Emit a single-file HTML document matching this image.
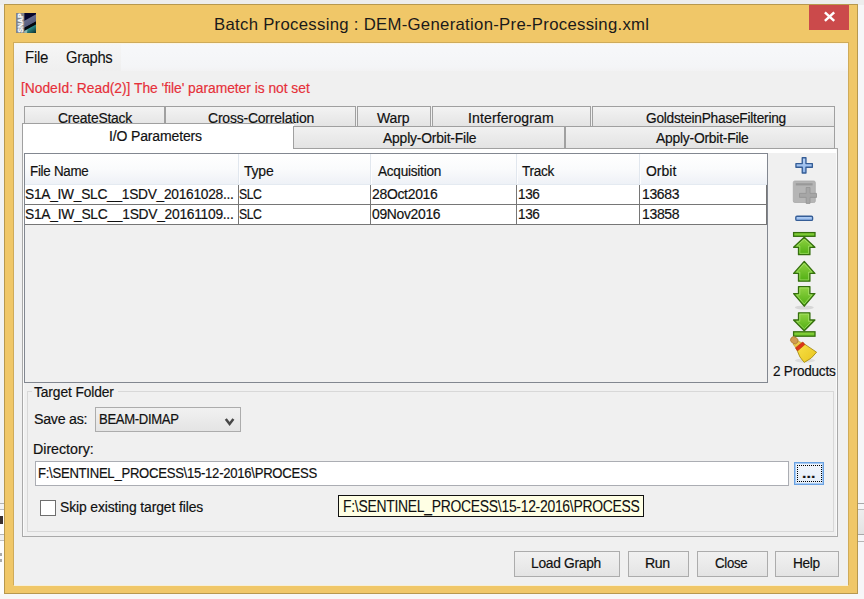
<!DOCTYPE html>
<html><head><meta charset="utf-8"><title>Batch Processing : DEM-Generation-Pre-Processing.xml</title>
<style>
html,body{margin:0;padding:0;}
body{width:864px;height:599px;position:relative;overflow:hidden;background:#f4f4f4;font-family:"Liberation Sans",sans-serif;}
.a{position:absolute;box-sizing:border-box;}
.t{-webkit-text-stroke:0.18px;position:absolute;white-space:pre;line-height:normal;font-family:"Liberation Sans",sans-serif;}
.tab{position:absolute;box-sizing:border-box;border:1px solid #a0a0a0;background:linear-gradient(#f3f3f3,#e4e4e4);}
.btn{position:absolute;box-sizing:border-box;border:1px solid #acacac;background:linear-gradient(#f1f1f1,#e4e4e4);}
.vl{position:absolute;width:1px;}
.hl{position:absolute;height:1px;}

</style></head>
<body>
<!-- desktop strips -->
<div class="a" style="left:0;top:0;width:864px;height:5px;background:#ededed"></div>
<div class="a" style="left:0;top:5px;width:5px;height:498px;background:#f2f2f2"></div>
<div class="a" style="left:0;top:503px;width:5px;height:1px;background:#b2b2b2"></div>
<div class="a" style="left:0;top:504px;width:5px;height:5px;background:#f3f3f3"></div>
<div class="a" style="left:0;top:509px;width:5px;height:1px;background:#bdbdbd"></div>
<div class="a" style="left:0;top:510px;width:5px;height:24px;background:#fdfdfd"></div>
<div class="a" style="left:0;top:516px;width:3px;height:8px;background:#3a3030"></div>
<div class="a" style="left:0;top:534px;width:5px;height:1px;background:#b5b5b5"></div>
<div class="a" style="left:0;top:535px;width:5px;height:5px;background:#efefef"></div>
<div class="a" style="left:0;top:540px;width:5px;height:1px;background:#c0c0c0"></div>
<div class="a" style="left:0;top:541px;width:5px;height:58px;background:#fcfcfc"></div>
<div class="a" style="left:0;top:553px;width:2px;height:3px;background:#aaa"></div>
<div class="a" style="left:0;top:559px;width:2px;height:3px;background:#aaa"></div>
<div class="a" style="left:858px;top:5px;width:6px;height:594px;background:#f6f6f8"></div>
<div class="a" style="left:858px;top:503px;width:6px;height:1px;background:#a8a8a8"></div>
<div class="a" style="left:858px;top:509px;width:6px;height:1px;background:#bdbdbd"></div>
<div class="a" style="left:858px;top:510px;width:6px;height:24px;background:linear-gradient(#eeeeee,#e3e3e3)"></div>
<div class="a" style="left:858px;top:534px;width:6px;height:1px;background:#a8a8a8"></div>
<div class="a" style="left:858px;top:541px;width:6px;height:1px;background:#b5b5b5"></div>
<div class="a" style="left:0;top:594px;width:864px;height:5px;background:#f7f7f7"></div>
<!-- window frame -->
<div class="a" id="win" style="left:4px;top:4px;width:854px;height:590px;background:#f0c768;border:1px solid #b7984e"></div>
<!-- app icon -->
<svg class="a" style="left:16px;top:13px" width="20" height="20" viewBox="0 0 20 20">
  <defs><linearGradient id="tg" x1="0" y1="0" x2="1" y2="1"><stop offset="0" stop-color="#0b1416"/><stop offset="0.45" stop-color="#2f8f8b"/><stop offset="1" stop-color="#0c2a2c"/></linearGradient>
  <linearGradient id="bg2" x1="0" y1="0" x2="0.5" y2="1"><stop offset="0" stop-color="#777b9c"/><stop offset="1" stop-color="#4f5474"/></linearGradient></defs>
  <rect x="0" y="0" width="20" height="20" fill="#07062c"/>
  <path d="M8 8 L20 1.2 L20 8.4 L8 15 Z" fill="url(#bg2)"/>
  <path d="M8 15 L20 8.4 L20 11.6 L8 18 Z" fill="#05070b"/>
  <path d="M8 18 L20 11.6 L20 20 L8 20 Z" fill="url(#tg)"/>
  <path d="M8 18.2 L11.5 16.5 L11 20 L8 20 Z" fill="#a9c2bd" opacity="0.8"/>
  <rect x="0" y="0" width="8.4" height="20" fill="#83858b"/>
  <text x="0" y="0" transform="translate(7.3,19.6) rotate(-90)" font-family="Liberation Sans, sans-serif" font-weight="bold" font-size="7.8" fill="#fff" stroke="#fff" stroke-width="0.3" textLength="19.2" lengthAdjust="spacingAndGlyphs">SNAP</text>
</svg>
<!-- close button -->
<div class="a" style="left:809px;top:5px;width:40px;height:25px;background:#cb4a4b"></div>
<svg class="a" style="left:820px;top:8px" width="20" height="18" viewBox="820 8 20 18"><path d="M824.9 12.3 L834.2 20.8 M834.2 12.3 L824.9 20.8" stroke="#fff" stroke-width="2.5" fill="none"/></svg>
<!-- client -->
<div class="a" style="left:13px;top:42px;width:836px;height:543px;background:#cfab5a"></div>
<div class="a" style="left:14px;top:585px;width:834px;height:1px;background:#f7efd8"></div>
<div class="a" id="client" style="left:14px;top:43px;width:834px;height:542px;background:#f0f0f0"></div>
<!-- menubar -->
<div class="a" style="left:14px;top:43px;width:834px;height:28px;background:linear-gradient(#f7f8fa,#f4f5f7 85%,#f2f2f3)"></div>
<div class="a" style="left:14px;top:43px;width:107px;height:28px;background:linear-gradient(#f6f6f6,#efefef)"></div>
<div class="a" style="left:14px;top:43px;width:834px;height:1px;background:#fcf6e6"></div>

<!-- tabs row 1 -->
<div class="tab" style="left:24px;top:106px;width:141px;height:21px"></div>
<div class="tab" style="left:165px;top:106px;width:191px;height:21px"></div>
<div class="tab" style="left:357px;top:106px;width:74px;height:21px"></div>
<div class="tab" style="left:432px;top:106px;width:159px;height:21px"></div>
<div class="tab" style="left:592px;top:106px;width:243px;height:21px"></div>
<span class="t" style="left:57.73px;top:111px;font-size:13.8px;letter-spacing:-0.217px;transform:scaleX(1.0075);transform-origin:0 0;color:#111;">CreateStack</span>
<span class="t" style="left:207.71px;top:111px;font-size:13.8px;letter-spacing:-0.194px;transform:scaleX(1.0115);transform-origin:0 0;color:#111;">Cross-Correlation</span>
<span class="t" style="left:376.88px;top:111px;font-size:13.8px;letter-spacing:-0.151px;transform:scaleX(1.0149);transform-origin:0 0;color:#111;">Warp</span>
<span class="t" style="left:467.59px;top:111px;font-size:13.8px;letter-spacing:0.098px;transform:scaleX(1.0201);transform-origin:0 0;color:#111;">Interferogram</span>
<span class="t" style="left:645.84px;top:111px;font-size:13.8px;letter-spacing:-0.233px;transform:scaleX(0.9917);transform-origin:0 0;color:#111;">GoldsteinPhaseFiltering</span>
<!-- content pane borders -->
<div class="a" style="left:22px;top:148px;width:816px;height:389px;border:1px solid #a9a9a9;background:#f0f0f0"></div>
<div class="a" style="left:23px;top:149px;width:814px;height:4px;background:#fff"></div>
<div class="a" style="left:23px;top:149px;width:1px;height:387px;background:#fafafa"></div>
<div class="a" style="left:836px;top:149px;width:1px;height:387px;background:#fafafa"></div>
<!-- selected tab -->
<div class="a" style="left:22px;top:123px;width:272px;height:27px;background:#fff;border:1px solid #a0a0a0;border-bottom:none;border-right:none"></div>
<!-- tabs row 2 -->
<div class="tab" style="left:293px;top:126px;width:272px;height:23px;background:linear-gradient(#f1f1f1,#e3e3e3)"></div>
<div class="tab" style="left:565px;top:126px;width:270px;height:23px;background:linear-gradient(#f1f1f1,#e3e3e3)"></div>

<!-- table -->
<div class="a" style="left:24px;top:153px;width:744px;height:230px;border:1px solid #828790;background:#f0f0f0"></div>
<div class="a" style="left:25px;top:154px;width:742px;height:31px;background:linear-gradient(#ffffff,#fafbfc 50%,#f2f4f8 85%,#eef2f7);border-bottom:1px solid #e4eaf1"></div>
<div class="vl" style="left:238px;top:154px;height:30px;background:#e1e7ee"></div><div class="vl" style="left:239px;top:154px;height:30px;background:#fdfdfe"></div>
<div class="vl" style="left:370px;top:154px;height:30px;background:#e1e7ee"></div><div class="vl" style="left:371px;top:154px;height:30px;background:#fdfdfe"></div>
<div class="vl" style="left:516px;top:154px;height:30px;background:#e1e7ee"></div><div class="vl" style="left:517px;top:154px;height:30px;background:#fdfdfe"></div>
<div class="vl" style="left:639px;top:154px;height:30px;background:#e1e7ee"></div><div class="vl" style="left:640px;top:154px;height:30px;background:#fdfdfe"></div>
<!-- rows -->
<div class="a" style="left:25px;top:185px;width:742px;height:40px;background:#fff"></div>
<div class="hl" style="left:25px;top:204px;width:742px;background:#767676"></div>
<div class="hl" style="left:25px;top:224px;width:742px;background:#767676"></div>
<div class="vl" style="left:238px;top:185px;height:40px;background:#767676"></div>
<div class="vl" style="left:370px;top:185px;height:40px;background:#767676"></div>
<div class="vl" style="left:516px;top:185px;height:40px;background:#767676"></div>
<div class="vl" style="left:639px;top:185px;height:40px;background:#767676"></div>
<div class="vl" style="left:766px;top:185px;height:40px;background:#767676"></div>

<!-- group box -->
<div class="a" style="left:27px;top:391px;width:807px;height:141px;border:1px solid #d8d8d8"></div>
<div class="a" style="left:32px;top:390px;width:86px;height:3px;background:#f0f0f0"></div>
<!-- combo -->
<div class="btn" style="left:95px;top:407px;width:146px;height:25px;"></div>
<svg class="a" style="left:222px;top:415px" width="16" height="14" viewBox="222 415 16 14"><path d="M225.8 419 L229.6 423.9 L233.4 419" stroke="#474747" stroke-width="2.5" fill="none"/></svg>
<!-- text field -->
<div class="a" style="left:35px;top:461px;width:754px;height:25px;border:1px solid #abadb3;background:#fff"></div>
<!-- ... button -->
<div class="a" style="left:794px;top:462px;width:30px;height:23px;border:1px solid #6aa2e2;box-shadow:inset 0 0 0 1px #a8cbf3;background:linear-gradient(#f0f5fb,#e6eef8)"></div>
<div class="a" style="left:797px;top:465px;width:25px;height:17px;border:1px dotted #000"></div>
<!-- checkbox -->
<div class="a" style="left:40px;top:500px;width:16px;height:16px;border:1px solid #6e6e6e;background:#fff"></div>
<!-- tooltip -->
<div class="a" style="left:338px;top:495px;width:306px;height:22px;border:1px solid #111;background:#ffffe4"></div>
<!-- buttons -->
<div class="btn" style="left:514px;top:551px;width:106px;height:26px"></div>
<div class="btn" style="left:628px;top:551px;width:61px;height:26px"></div>
<div class="btn" style="left:697px;top:551px;width:71px;height:26px"></div>
<div class="btn" style="left:775px;top:551px;width:64px;height:26px"></div>
<!-- icon column -->
<svg class="a" style="left:785px;top:150px" width="50" height="220" viewBox="785 150 50 220">
  <defs>
    <linearGradient id="bl" x1="0" y1="0" x2="0" y2="1"><stop offset="0" stop-color="#b9d3f5"/><stop offset="1" stop-color="#8db4ea"/></linearGradient>
    <linearGradient id="gr" x1="0" y1="0" x2="0" y2="1"><stop offset="0" stop-color="#92d444"/><stop offset="1" stop-color="#4fae12"/></linearGradient>
    <linearGradient id="gr2" x1="0" y1="0" x2="0" y2="1"><stop offset="0" stop-color="#8fd43f"/><stop offset="1" stop-color="#6cc52a"/></linearGradient>
    <linearGradient id="ye" x1="0" y1="0" x2="1" y2="1"><stop offset="0" stop-color="#f9e24a"/><stop offset="1" stop-color="#e8c41c"/></linearGradient>
  </defs>
  <!-- plus -->
  <path d="M802.25 157.75 H805.95 V163.55 H812.35 V167.25 H805.95 V172.95 H802.25 V167.25 H795.95 V163.55 H802.25 Z" fill="url(#bl)" stroke="#355d96" stroke-width="1.35" stroke-linejoin="round"/>
  <!-- gray add -->
  <rect x="793.3" y="181" width="22" height="21.5" rx="1.5" fill="#b5b5b5" stroke="#a9a9a9" stroke-width="0.8"/>
  <rect x="795.8" y="183.2" width="16.8" height="2.2" fill="#999"/>
  <path d="M806.2 187.5 h3.8 v5.9 h6.5 v4 h-6.5 v6 h-3.8 v-6 h-6.7 v-4 h6.7 z" fill="#a6a6a6" stroke="#969696" stroke-width="0.9" stroke-linejoin="round"/>
  <!-- minus -->
  <rect x="795.8" y="216.2" width="16.8" height="4.2" rx="1.2" fill="url(#bl)" stroke="#355d96" stroke-width="1.35"/>
  <!-- go top -->
  <rect x="793.6" y="232.6" width="21.4" height="3.7" fill="url(#gr2)" stroke="#356f0e" stroke-width="1.3"/>
  <path d="M804.25 237.2 L814.9 247.3 H809.9 V254.7 H798.5 V247.3 H793.6 Z" fill="url(#gr)" stroke="#356f0e" stroke-width="1.3" stroke-linejoin="round"/>
  <path d="M804.25 239.3 L811.8 246 H808.6 V253.4 H799.8 V246 H796.7 Z" fill="none" stroke="#b4ea7c" stroke-width="0.8" stroke-linejoin="round" opacity="0.75"/>
  <!-- up -->
  <path d="M804.25 261.4 L814.9 273.4 H809.9 V281.2 H798.5 V273.4 H793.6 Z" fill="url(#gr)" stroke="#356f0e" stroke-width="1.3" stroke-linejoin="round"/>
  <path d="M804.25 263.6 L811.9 272.1 H808.6 V279.9 H799.8 V272.1 H796.6 Z" fill="none" stroke="#b4ea7c" stroke-width="0.8" stroke-linejoin="round" opacity="0.75"/>
  <!-- down -->
  <ellipse cx="804.3" cy="307.5" rx="9.5" ry="2" fill="#000" opacity="0.10"/>
  <path d="M804.25 306.2 L814.9 293.6 H809.9 V286.6 H798.5 V293.6 H793.6 Z" fill="url(#gr)" stroke="#356f0e" stroke-width="1.3" stroke-linejoin="round"/>
  <path d="M804.25 304 L811.9 294.9 H808.6 V287.9 H799.8 V294.9 H796.6 Z" fill="none" stroke="#b4ea7c" stroke-width="0.8" stroke-linejoin="round" opacity="0.75"/>
  <!-- go bottom -->
  <path d="M804.25 330.8 L814.9 320 H809.9 V312.8 H798.5 V320 H793.6 Z" fill="url(#gr)" stroke="#356f0e" stroke-width="1.3" stroke-linejoin="round"/>
  <path d="M804.25 328.7 L811.8 321.3 H808.6 V314.1 H799.8 V321.3 H796.7 Z" fill="none" stroke="#b4ea7c" stroke-width="0.8" stroke-linejoin="round" opacity="0.75"/>
  <rect x="793.6" y="331.8" width="21.4" height="4.4" fill="url(#gr2)" stroke="#356f0e" stroke-width="1.3"/>
  <!-- broom -->
  <ellipse cx="805" cy="360.5" rx="10" ry="2" fill="#000" opacity="0.08"/>
  <path d="M793 344 L797 340.5 L802.5 343.2 L796.5 348.6 Z" fill="#ecc94a" stroke="#b49a1e" stroke-width="0.6"/>
  <ellipse cx="794.3" cy="340.3" rx="3.9" ry="3.3" transform="rotate(35 794.3 340.3)" fill="#d19b52" stroke="#b07f38" stroke-width="0.8"/>
  <path d="M796.6 349.4 L803.2 343.2 L816.6 352.2 Q812 359 804.2 362.4 Q799 357 797.5 351.3 Z" fill="url(#ye)" stroke="#a88e1a" stroke-width="0.9" stroke-linejoin="round"/>
  <path d="M795.4 347.9 L802.8 342 L804.8 344.6 L797.6 350.8 Z" fill="#dc3518" stroke="#b8260e" stroke-width="0.6"/>
</svg>

<span class="t" style="left:213.98px;top:15px;font-size:16.5px;letter-spacing:0.284px;transform:scaleX(1.0142);transform-origin:0 0;color:#1a1a1a;-webkit-text-stroke:0;">Batch Processing : DEM-Generation-Pre-Processing.xml</span>
<span class="t" style="left:24.76px;top:49px;font-size:15.6px;letter-spacing:-0.293px;transform:scaleX(0.9638);transform-origin:0 0;color:#111;-webkit-text-stroke:0.1px;">File</span>
<span class="t" style="left:66.42px;top:49px;font-size:15.6px;letter-spacing:-0.358px;transform:scaleX(0.9470);transform-origin:0 0;color:#111;-webkit-text-stroke:0.1px;">Graphs</span>
<span class="t" style="left:20.94px;top:81px;font-size:13.8px;letter-spacing:-0.032px;transform:scaleX(1.0026);transform-origin:0 0;color:#e6303a;">[NodeId: Read(2)] The 'file' parameter is not set</span>
<span class="t" style="left:109.44px;top:129px;font-size:13.8px;letter-spacing:-0.138px;transform:scaleX(1.0144);transform-origin:0 0;color:#111;">I/O Parameters</span>
<span class="t" style="left:382.83px;top:131px;font-size:13.8px;letter-spacing:-0.190px;transform:scaleX(1.0062);transform-origin:0 0;color:#111;">Apply-Orbit-File</span>
<span class="t" style="left:655.82px;top:131px;font-size:13.8px;letter-spacing:-0.223px;transform:scaleX(1.0036);transform-origin:0 0;color:#111;">Apply-Orbit-File</span>
<span class="t" style="left:30.00px;top:164px;font-size:13.8px;letter-spacing:-0.275px;transform:scaleX(0.9679);transform-origin:0 0;color:#111;">File Name</span>
<span class="t" style="left:244.38px;top:164px;font-size:13.8px;letter-spacing:-0.224px;transform:scaleX(1.0144);transform-origin:0 0;color:#111;">Type</span>
<span class="t" style="left:377.78px;top:164px;font-size:13.8px;letter-spacing:-0.234px;transform:scaleX(0.9831);transform-origin:0 0;color:#111;">Acquisition</span>
<span class="t" style="left:522.08px;top:164px;font-size:13.8px;letter-spacing:-0.297px;transform:scaleX(0.9830);transform-origin:0 0;color:#111;">Track</span>
<span class="t" style="left:645.97px;top:164px;font-size:13.8px;letter-spacing:0.023px;transform:scaleX(1.0104);transform-origin:0 0;color:#111;">Orbit</span>
<span class="t" style="left:25.08px;top:187px;font-size:13.8px;letter-spacing:-0.281px;transform:scaleX(0.9967);transform-origin:0 0;color:#111;">S1A_IW_SLC__1SDV_20161028...</span>
<span class="t" style="left:239.10px;top:187px;font-size:13.8px;letter-spacing:-0.470px;transform:scaleX(0.8836);transform-origin:0 0;color:#111;">SLC</span>
<span class="t" style="left:372.44px;top:187px;font-size:13.8px;letter-spacing:-0.295px;transform:scaleX(1.0100);transform-origin:0 0;color:#111;">28Oct2016</span>
<span class="t" style="left:518.25px;top:187px;font-size:13.8px;letter-spacing:-0.403px;transform:scaleX(0.9822);transform-origin:0 0;color:#111;">136</span>
<span class="t" style="left:642.00px;top:187px;font-size:13.8px;letter-spacing:-0.336px;transform:scaleX(1.0120);transform-origin:0 0;color:#111;">13683</span>
<span class="t" style="left:25.08px;top:207px;font-size:13.8px;letter-spacing:-0.280px;transform:scaleX(1.0013);transform-origin:0 0;color:#111;">S1A_IW_SLC__1SDV_20161109...</span>
<span class="t" style="left:239.10px;top:207px;font-size:13.8px;letter-spacing:-0.470px;transform:scaleX(0.8836);transform-origin:0 0;color:#111;">SLC</span>
<span class="t" style="left:372.06px;top:207px;font-size:13.8px;letter-spacing:-0.309px;transform:scaleX(1.0070);transform-origin:0 0;color:#111;">09Nov2016</span>
<span class="t" style="left:518.25px;top:207px;font-size:13.8px;letter-spacing:-0.403px;transform:scaleX(0.9822);transform-origin:0 0;color:#111;">136</span>
<span class="t" style="left:642.00px;top:207px;font-size:13.8px;letter-spacing:-0.336px;transform:scaleX(1.0142);transform-origin:0 0;color:#111;">13858</span>
<span class="t" style="left:772.59px;top:364px;font-size:13.8px;letter-spacing:-0.256px;transform:scaleX(0.9851);transform-origin:0 0;color:#111;">2 Products</span>
<span class="t" style="left:34.07px;top:385px;font-size:13.8px;letter-spacing:-0.108px;transform:scaleX(0.9993);transform-origin:0 0;color:#111;">Target Folder</span>
<span class="t" style="left:34.08px;top:412px;font-size:13.8px;letter-spacing:-0.268px;transform:scaleX(1.0316);transform-origin:0 0;color:#111;">Save as:</span>
<span class="t" style="left:98.50px;top:412px;font-size:13.8px;letter-spacing:-0.340px;transform:scaleX(0.9479);transform-origin:0 0;color:#111;">BEAM-DIMAP</span>
<span class="t" style="left:33.05px;top:442px;font-size:13.8px;letter-spacing:-0.031px;transform:scaleX(1.0329);transform-origin:0 0;color:#111;">Directory:</span>
<span class="t" style="left:37.50px;top:466px;font-size:13.8px;letter-spacing:-0.288px;transform:scaleX(0.9502);transform-origin:0 0;color:#111;">F:\SENTINEL_PROCESS\15-12-2016\PROCESS</span>
<span class="t" style="left:60.02px;top:500px;font-size:13.8px;letter-spacing:-0.107px;transform:scaleX(1.0067);transform-origin:0 0;color:#111;">Skip existing target files</span>
<span class="t" style="left:342.50px;top:498px;font-size:15.6px;letter-spacing:-0.325px;transform:scaleX(0.8940);transform-origin:0 0;color:#111;-webkit-text-stroke:0.1px;">F:\SENTINEL_PROCESS\15-12-2016\PROCESS</span>
<span class="t" style="left:531.00px;top:556px;font-size:13.8px;letter-spacing:-0.283px;transform:scaleX(0.9989);transform-origin:0 0;color:#111;">Load Graph</span>
<span class="t" style="left:645.00px;top:556px;font-size:13.8px;letter-spacing:-0.443px;transform:scaleX(1.0282);transform-origin:0 0;color:#111;">Run</span>
<span class="t" style="left:714.90px;top:556px;font-size:13.8px;letter-spacing:-0.309px;transform:scaleX(0.9591);transform-origin:0 0;color:#111;">Close</span>
<span class="t" style="left:792.50px;top:556px;font-size:13.8px;letter-spacing:-0.331px;transform:scaleX(0.9872);transform-origin:0 0;color:#111;">Help</span>
<span class="t" style="left:801.73px;top:465px;font-size:14px;letter-spacing:0.064px;transform:scaleX(1.1418);transform-origin:0 0;color:#111;font-weight:bold;">...</span>
</body></html>
